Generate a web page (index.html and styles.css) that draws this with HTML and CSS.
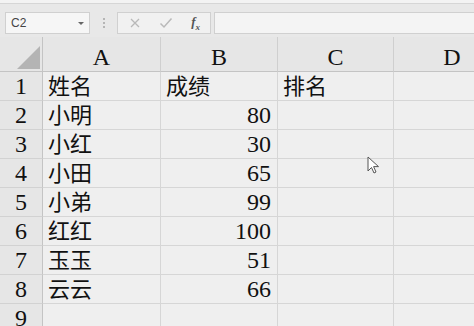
FILE: index.html
```html
<!DOCTYPE html>
<html lang="zh-CN">
<head>
	<meta charset="UTF-8">
	<title>成绩排名</title>
	<link rel="stylesheet" href="styles.css">
</head>
<body>
	<div class="app">
		<div class="topStrip"></div>
		<div class="formulaBar">
			<div class="nameBox">
				<span class="cellRef">C2</span>
				<span class="dropArrow"></span>
			</div>
			<div class="dots"><i></i><i></i><i></i></div>
			<div class="fxGroup">
				<svg class="fxIcon" width="12" height="12" viewBox="0 0 12 12"><path d="M2 2 L10 10 M10 2 L2 10" stroke="#b9b9b9" stroke-width="1.3" fill="none"/></svg>
				<svg class="fxIcon" width="14" height="12" viewBox="0 0 14 12"><path d="M1.5 6.5 L5 10 L12.5 1.5" stroke="#b9b9b9" stroke-width="1.5" fill="none"/></svg>
				<span class="fxText">f<sub>x</sub></span>
			</div>
			<div class="formulaInput"></div>
		</div>

		<div class="sheet">
			<div class="corner"><span class="cornerTri"></span></div>
			<div class="colHead">A</div>
			<div class="colHead">B</div>
			<div class="colHead">C</div>
			<div class="colHead">D</div>

			<div class="rowHead">1</div><div class="cell">姓名</div><div class="cell">成绩</div><div class="cell">排名</div><div class="cell"></div>
			<div class="rowHead">2</div><div class="cell">小明</div><div class="cell num">80</div><div class="cell"></div><div class="cell"></div>
			<div class="rowHead">3</div><div class="cell">小红</div><div class="cell num">30</div><div class="cell"></div><div class="cell"></div>
			<div class="rowHead">4</div><div class="cell">小田</div><div class="cell num">65</div><div class="cell"></div><div class="cell"></div>
			<div class="rowHead">5</div><div class="cell">小弟</div><div class="cell num">99</div><div class="cell"></div><div class="cell"></div>
			<div class="rowHead">6</div><div class="cell">红红</div><div class="cell num">100</div><div class="cell"></div><div class="cell"></div>
			<div class="rowHead">7</div><div class="cell">玉玉</div><div class="cell num">51</div><div class="cell"></div><div class="cell"></div>
			<div class="rowHead">8</div><div class="cell">云云</div><div class="cell num">66</div><div class="cell"></div><div class="cell"></div>
			<div class="rowHead">9</div><div class="cell"></div><div class="cell"></div><div class="cell"></div><div class="cell"></div>
		</div>

		<!-- 鼠标指针 -->
		<svg class="pointer" width="14" height="19" viewBox="0 0 14 19">
			<path d="M1 1 L1 15 L4.5 11.5 L7 17 L9 16 L6.6 10.6 L11.5 10.6 Z" fill="#fff" stroke="#555" stroke-width="1" stroke-linejoin="round"/>
		</svg>
	</div>
</body>
</html>
```

FILE: styles.css
```css
html,body{margin:0px;padding:0px;}
body{
	background-color: #efefef;
	font-family: "Liberation Serif", "Noto Sans CJK SC", serif;
	color: #111;
}
.app{
	width: 474px;
	height: 326px;
	overflow: hidden;
	position: relative;
}
.topStrip{
	height: 3px;
	background-color: #f3f3f3;
	border-bottom: 1px solid #d6d6d6;
}
.formulaBar{
	height: 33px;
	background-color: #e8e8e8;
	display: flex;
	align-items: flex-start;
	padding: 8px 0 0 5px;
	box-sizing: border-box;
}
.nameBox{
	width: 85px;
	height: 22px;
	box-sizing: border-box;
	border: 1px solid #d0d0d0;
	background-color: #f6f6f6;
	display: flex;
	align-items: center;
	padding: 0 5px;
	justify-content: space-between;
}
.cellRef{
	font-family: "Liberation Sans", sans-serif;
	font-size: 12px;
	color: #444;
}
.dropArrow{
	width: 0;
	height: 0;
	border-left: 3px solid transparent;
	border-right: 3px solid transparent;
	border-top: 3px solid #666;
}
.dots{
	width: 27px;
	height: 22px;
	display: flex;
	flex-direction: column;
	align-items: center;
	justify-content: center;
	gap: 2px;
}
.dots i{
	width: 2px;
	height: 2px;
	background-color: #b5b5b5;
}
.fxGroup{
	width: 94px;
	height: 22px;
	box-sizing: border-box;
	border: 1px solid #d0d0d0;
	background-color: #f1f1f1;
	display: flex;
	align-items: center;
	justify-content: space-between;
	padding: 0 10px 0 11px;
}
.fxText{
	font-family: "Liberation Serif", serif;
	font-style: italic;
	font-weight: bold;
	font-size: 13px;
	color: #555;
}
.fxText sub{
	font-size: 9px;
}
.formulaInput{
	flex: 1;
	height: 22px;
	margin-left: 3px;
	box-sizing: border-box;
	border: 1px solid #d0d0d0;
	border-right: 0;
	background-color: #f4f4f4;
}
.sheet{
	display: grid;
	grid-template-columns: 43px 118px 117px 116px 117px;
	grid-template-rows: 35px;
	grid-auto-rows: 29px;
	font-size: 22px;
}
.corner{
	background-color: #e6e6e6;
	border-right: 1px solid #c4c4c4;
	border-bottom: 1px solid #c4c4c4;
	display: flex;
	align-items: flex-end;
	justify-content: flex-end;
	padding: 0 2px 2px 0;
}
.cornerTri{
	width: 0;
	height: 0;
	border-left: 23px solid transparent;
	border-bottom: 23px solid #b4b4b4;
}
.colHead{
	background-color: #e6e6e6;
	border-right: 1px solid #cfcfcf;
	border-bottom: 1px solid #c4c4c4;
	display: flex;
	align-items: flex-end;
	justify-content: center;
	line-height: 1;
	padding-bottom: 2px;
	font-size: 24px;
}
.rowHead{
	background-color: #e6e6e6;
	border-right: 1px solid #c4c4c4;
	border-bottom: 1px solid #d2d2d2;
	display: flex;
	align-items: flex-end;
	justify-content: center;
	line-height: 1;
	padding-bottom: 2px;
	font-size: 24px;
}
.cell{
	border-right: 1px solid #d6d6d6;
	border-bottom: 1px solid #d6d6d6;
	display: flex;
	align-items: flex-end;
	line-height: 1;
	padding: 0 5px 2px 5px;
	white-space: nowrap;
}
.num{
	justify-content: flex-end;
	font-size: 24px;
	padding-right: 6px;
}
.pointer{
	position: absolute;
	left: 367px;
	top: 156px;
}
```
